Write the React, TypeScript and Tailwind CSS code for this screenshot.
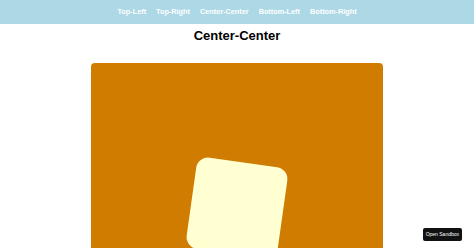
const links = ["Top-Left", "Top-Right", "Center-Center", "Bottom-Left", "Bottom-Right"];

const App = () => {
    return (
        <div className="min-h-screen bg-white font-['Liberation_Sans',Arial,sans-serif]">
            <nav className="h-[24px] bg-[#add8e6] flex items-center justify-center gap-[10px]">
                {links.map((l) => (
                    <a key={l} className="text-white font-bold text-[7.3px] leading-none cursor-pointer">
                        {l}
                    </a>
                ))}
            </nav>
            <h1 className="text-center font-bold text-[13px] leading-none text-black mt-[5px]">Center-Center</h1>
            <div className="mx-auto mt-[21px] w-[292px] h-[290px] rounded-[4px] bg-[#cf7c00] flex items-center justify-center">
                <div className="w-[92px] h-[92px] rounded-[12px] bg-[#ffffd2] rotate-[8deg]" />
            </div>
            <button className="fixed right-[12px] bottom-[7px] h-[13px] px-[3px] rounded-[2px] bg-[#111] text-white text-[5px] leading-none">
                Open Sandbox
            </button>
        </div>
    );
};

export default App;
